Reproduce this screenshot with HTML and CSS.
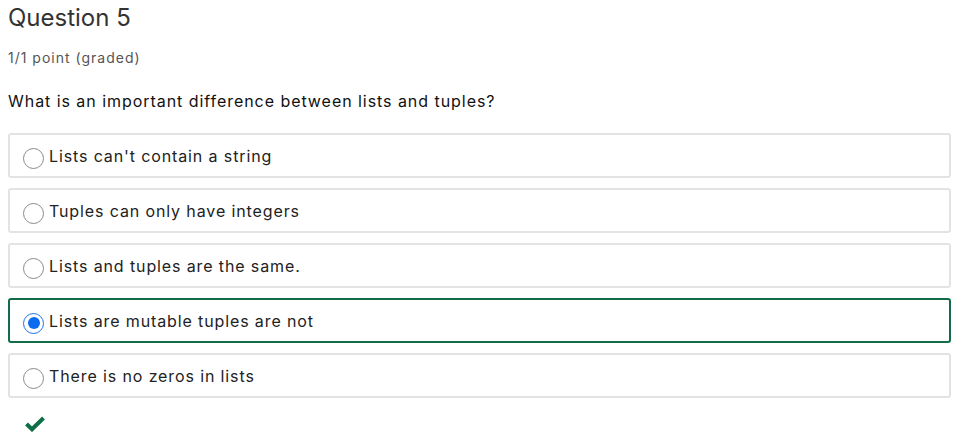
FILE: index.html
```html
<!DOCTYPE html>
<html>
<head>
<meta charset="utf-8">
<link rel="stylesheet" href="styles.css">
</head>
<body>
<div class="problem">
  <h3 class="title">Question 5</h3>
  <div class="points">1/1 point (graded)</div>
  <p class="prompt">What is an important difference between lists and tuples?</p>
  <div class="options">
    <label class="option"><span class="radio"></span><span class="text">Lists can't contain a string</span></label>
    <label class="option"><span class="radio"></span><span class="text">Tuples can only have integers</span></label>
    <label class="option"><span class="radio"></span><span class="text">Lists and tuples are the same.</span></label>
    <label class="option correct"><span class="radio checked"></span><span class="text">Lists are mutable tuples are not</span></label>
    <label class="option"><span class="radio"></span><span class="text">There is no zeros in lists</span></label>
  </div>
  <div class="status">
    <svg width="20" height="16" viewBox="0 0 20 16"><path d="M1.5 8 L7 13.3 L18.5 2" fill="none" stroke="#0e6e46" stroke-width="4" stroke-linejoin="miter" stroke-linecap="butt"/></svg>
  </div>
</div>
</body>
</html>
```
FILE: styles.css
```css
body {
  margin: 8px;
  font-family: Inter, "Open Sans", sans-serif;
  background: #fff;
  color: #111;
}
.problem {
  width: 943px;
}
.title {
  margin: 0;
  font-size: 24px;
  font-weight: 400;
  line-height: 20px;
  color: #333;
}
.points {
  margin-top: 22px;
  font-size: 14px;
  line-height: 16px;
  letter-spacing: 1px;
  color: #555;
}
.prompt {
  margin: 25px 0 0 0;
  font-size: 16px;
  line-height: 20px;
  letter-spacing: 0.95px;
  color: #111;
}
.options {
  margin-top: 22px;
  display: flex;
  flex-direction: column;
  gap: 10px;
}
.option {
  display: flex;
  align-items: center;
  height: 45px;
  box-sizing: border-box;
  border: 2px solid #e3e3e3;
  border-radius: 3px;
  padding-left: 13px;
  font-size: 16px;
  letter-spacing: 0.88px;
  color: #222;
}
.option.correct {
  border-color: #126c47;
}
.radio {
  width: 21px;
  height: 21px;
  box-sizing: border-box;
  border: 1px solid #8a8a8a;
  border-radius: 50%;
  background: #fff;
  margin-top: 5px;
  margin-right: 5px;
  flex: none;
  position: relative;
}
.radio.checked {
  border: 1px solid #1a73e8;
}
.radio.checked::after {
  content: "";
  position: absolute;
  left: 3.5px;
  top: 3.5px;
  width: 12px;
  height: 12px;
  border-radius: 50%;
  background: #0b6cf0;
}
.text {
  line-height: 20px;
}
.status {
  margin-top: 18px;
  padding-left: 17px;
  height: 20px;
}
```
